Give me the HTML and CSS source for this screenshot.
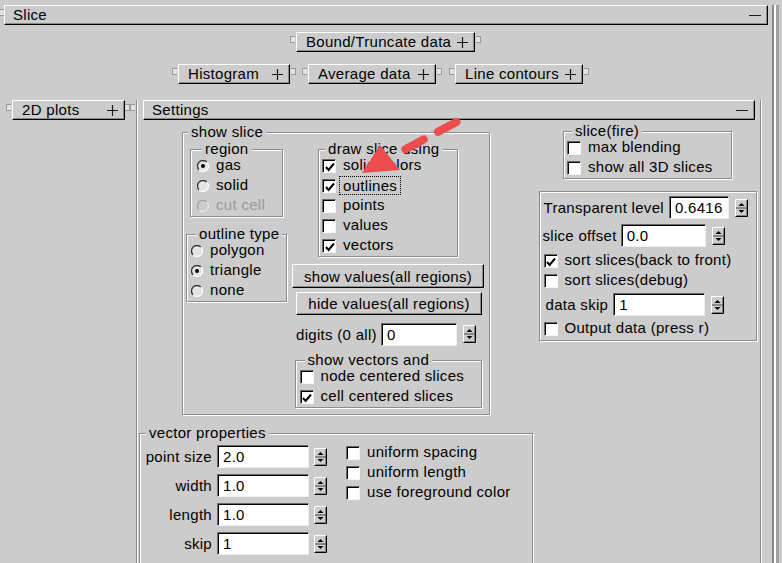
FILE: index.html
```html
<!DOCTYPE html>
<html>
<head>
<meta charset="utf-8">
<title>Slice</title>
<link rel="stylesheet" href="styles.css">
</head>
<body>
<div class="slice">
  <div class="headrow">
    <span class="cn l"></span>
    <div class="rollhead slicehead"><span>Slice</span><i class="minus"></i></div>
  </div>

  <div class="btnrow r1">
    <div class="rgrp">
      <span class="cn l"></span>
      <div class="rbtn w-bound"><span>Bound/Truncate data</span><svg class="plus" width="11" height="11" viewBox="0 0 11 11"><path d="M5.5 0v11M0 5.5h11" stroke="#1a1a1a" stroke-width="1.2"/></svg></div>
      <span class="cn r"></span>
    </div>
  </div>

  <div class="btnrow r2">
    <div class="rgrp">
      <span class="cn l"></span>
      <div class="rbtn w-hist"><span>Histogram</span><svg class="plus" width="11" height="11" viewBox="0 0 11 11"><path d="M5.5 0v11M0 5.5h11" stroke="#1a1a1a" stroke-width="1.2"/></svg></div>
      <span class="cn r"></span>
    </div>
    <div class="rgrp">
      <span class="cn l"></span>
      <div class="rbtn w-avg"><span>Average data</span><svg class="plus" width="11" height="11" viewBox="0 0 11 11"><path d="M5.5 0v11M0 5.5h11" stroke="#1a1a1a" stroke-width="1.2"/></svg></div>
      <span class="cn r"></span>
    </div>
    <div class="rgrp g-line">
      <span class="cn l"></span>
      <div class="rbtn w-avg"><span>Line contours</span><svg class="plus" width="11" height="11" viewBox="0 0 11 11"><path d="M5.5 0v11M0 5.5h11" stroke="#1a1a1a" stroke-width="1.2"/></svg></div>
      <span class="cn r"></span>
    </div>
  </div>

  <div class="mainrow">
    <div class="rgrp g2d">
      <span class="cn l"></span>
      <div class="rbtn w-2d"><span>2D plots</span><svg class="plus" width="11" height="11" viewBox="0 0 11 11"><path d="M5.5 0v11M0 5.5h11" stroke="#1a1a1a" stroke-width="1.2"/></svg></div>
      <span class="cn r tight"></span>
    </div>
    <span class="cn l setcn"></span>

    <div class="settings">
      <div class="rollhead sethead"><span>Settings</span><i class="minus"></i></div>
      <div class="setbody">
        <div class="colL">
          <fieldset class="grp showslice">
            <legend>show slice</legend>
            <div class="ss-inner">
              <div class="subL">
                <fieldset class="grp region">
                  <legend>region</legend>
                  <div class="row"><svg class="rd" width="12" height="12" viewBox="0 0 12 12"><circle cx="6" cy="6" r="5" fill="#e4e4e4"/><path d="M2.1 9.9A5.5 5.5 0 0 1 9.9 2.1" fill="none" stroke="#333" stroke-width="1.3"/><path d="M9.9 2.1A5.5 5.5 0 0 1 2.1 9.9" fill="none" stroke="#fff" stroke-width="1.3"/><circle cx="6" cy="6" r="2" fill="#000"/></svg><span class="t">gas</span></div>
                  <div class="row"><svg class="rd" width="12" height="12" viewBox="0 0 12 12"><circle cx="6" cy="6" r="5" fill="#e4e4e4"/><path d="M2.1 9.9A5.5 5.5 0 0 1 9.9 2.1" fill="none" stroke="#333" stroke-width="1.3"/><path d="M9.9 2.1A5.5 5.5 0 0 1 2.1 9.9" fill="none" stroke="#fff" stroke-width="1.3"/></svg><span class="t">solid</span></div>
                  <div class="row off"><svg class="rd" width="12" height="12" viewBox="0 0 12 12"><path d="M2.1 9.9A5.5 5.5 0 0 1 9.9 2.1" fill="none" stroke="#9a9a9a" stroke-width="1.2"/><path d="M9.9 2.1A5.5 5.5 0 0 1 2.1 9.9" fill="none" stroke="#e8e8e8" stroke-width="1.2"/></svg><span class="t">cut cell</span></div>
                </fieldset>
                <fieldset class="grp outline">
                  <legend>outline type</legend>
                  <div class="row"><svg class="rd" width="12" height="12" viewBox="0 0 12 12"><circle cx="6" cy="6" r="5" fill="#e4e4e4"/><path d="M2.1 9.9A5.5 5.5 0 0 1 9.9 2.1" fill="none" stroke="#333" stroke-width="1.3"/><path d="M9.9 2.1A5.5 5.5 0 0 1 2.1 9.9" fill="none" stroke="#fff" stroke-width="1.3"/></svg><span class="t">polygon</span></div>
                  <div class="row"><svg class="rd" width="12" height="12" viewBox="0 0 12 12"><circle cx="6" cy="6" r="5" fill="#e4e4e4"/><path d="M2.1 9.9A5.5 5.5 0 0 1 9.9 2.1" fill="none" stroke="#333" stroke-width="1.3"/><path d="M9.9 2.1A5.5 5.5 0 0 1 2.1 9.9" fill="none" stroke="#fff" stroke-width="1.3"/><circle cx="6" cy="6" r="2" fill="#000"/></svg><span class="t">triangle</span></div>
                  <div class="row"><svg class="rd" width="12" height="12" viewBox="0 0 12 12"><circle cx="6" cy="6" r="5" fill="#e4e4e4"/><path d="M2.1 9.9A5.5 5.5 0 0 1 9.9 2.1" fill="none" stroke="#333" stroke-width="1.3"/><path d="M9.9 2.1A5.5 5.5 0 0 1 2.1 9.9" fill="none" stroke="#fff" stroke-width="1.3"/></svg><span class="t">none</span></div>
                </fieldset>
              </div>

              <div class="subR">
                <fieldset class="grp draw">
                  <legend>draw slice using</legend>
                  <div class="row"><span class="cb"><svg width="10" height="10" viewBox="0 0 10 10"><path d="M1 5l2.6 3L9 1.5" fill="none" stroke="#000" stroke-width="2"/></svg></span><span class="t">solid colors</span></div>
                  <div class="row"><span class="cb"><svg width="10" height="10" viewBox="0 0 10 10"><path d="M1 5l2.6 3L9 1.5" fill="none" stroke="#000" stroke-width="2"/></svg></span><span class="t focus">outlines</span></div>
                  <div class="row"><span class="cb"></span><span class="t">points</span></div>
                  <div class="row"><span class="cb"></span><span class="t">values</span></div>
                  <div class="row"><span class="cb"><svg width="10" height="10" viewBox="0 0 10 10"><path d="M1 5l2.6 3L9 1.5" fill="none" stroke="#000" stroke-width="2"/></svg></span><span class="t">vectors</span></div>
                </fieldset>
                <div class="pbtn w-show">show values(all regions)</div>
                <div class="pbtn w-hide">hide values(all regions)</div>
                <div class="frow digits">
                  <span>digits (0 all)</span>
                  <span class="field w-dig">0</span>
                  <svg class="spin" width="13" height="18" viewBox="0 0 13 18"><rect width="13" height="18" fill="#cdcdcd"/><path d="M0.5 17.5V0.5H12.5" fill="none" stroke="#fff"/><path d="M0.5 17.5H12.5V0.5" fill="none" stroke="#000"/><path d="M1.5 16.5H11.5V1.5" fill="none" stroke="#808080"/><path d="M1 9H12" stroke="#444"/><path d="M3.5 7L6.5 4L9.5 7Z" fill="#000"/><path d="M3.5 11L6.5 14L9.5 11Z" fill="#000"/></svg>
                </div>
                <fieldset class="grp vecs">
                  <legend>show vectors and</legend>
                  <div class="row"><span class="cb"></span><span class="t">node centered slices</span></div>
                  <div class="row"><span class="cb"><svg width="10" height="10" viewBox="0 0 10 10"><path d="M1 5l2.6 3L9 1.5" fill="none" stroke="#000" stroke-width="2"/></svg></span><span class="t">cell centered slices</span></div>
                </fieldset>
              </div>
            </div>
          </fieldset>

          <fieldset class="grp vprops">
            <legend>vector properties</legend>
            <div class="vp-inner">
              <div class="vgrid">
                <span class="lbl">point size</span><span class="field">2.0</span><svg class="spin" width="13" height="18" viewBox="0 0 13 18"><rect width="13" height="18" fill="#cdcdcd"/><path d="M0.5 17.5V0.5H12.5" fill="none" stroke="#fff"/><path d="M0.5 17.5H12.5V0.5" fill="none" stroke="#000"/><path d="M1.5 16.5H11.5V1.5" fill="none" stroke="#808080"/><path d="M1 9H12" stroke="#444"/><path d="M3.5 7L6.5 4L9.5 7Z" fill="#000"/><path d="M3.5 11L6.5 14L9.5 11Z" fill="#000"/></svg>
                <span class="lbl">width</span><span class="field">1.0</span><svg class="spin" width="13" height="18" viewBox="0 0 13 18"><rect width="13" height="18" fill="#cdcdcd"/><path d="M0.5 17.5V0.5H12.5" fill="none" stroke="#fff"/><path d="M0.5 17.5H12.5V0.5" fill="none" stroke="#000"/><path d="M1.5 16.5H11.5V1.5" fill="none" stroke="#808080"/><path d="M1 9H12" stroke="#444"/><path d="M3.5 7L6.5 4L9.5 7Z" fill="#000"/><path d="M3.5 11L6.5 14L9.5 11Z" fill="#000"/></svg>
                <span class="lbl">length</span><span class="field">1.0</span><svg class="spin" width="13" height="18" viewBox="0 0 13 18"><rect width="13" height="18" fill="#cdcdcd"/><path d="M0.5 17.5V0.5H12.5" fill="none" stroke="#fff"/><path d="M0.5 17.5H12.5V0.5" fill="none" stroke="#000"/><path d="M1.5 16.5H11.5V1.5" fill="none" stroke="#808080"/><path d="M1 9H12" stroke="#444"/><path d="M3.5 7L6.5 4L9.5 7Z" fill="#000"/><path d="M3.5 11L6.5 14L9.5 11Z" fill="#000"/></svg>
                <span class="lbl">skip</span><span class="field">1</span><svg class="spin" width="13" height="18" viewBox="0 0 13 18"><rect width="13" height="18" fill="#cdcdcd"/><path d="M0.5 17.5V0.5H12.5" fill="none" stroke="#fff"/><path d="M0.5 17.5H12.5V0.5" fill="none" stroke="#000"/><path d="M1.5 16.5H11.5V1.5" fill="none" stroke="#808080"/><path d="M1 9H12" stroke="#444"/><path d="M3.5 7L6.5 4L9.5 7Z" fill="#000"/><path d="M3.5 11L6.5 14L9.5 11Z" fill="#000"/></svg>
              </div>
              <div class="vchecks">
                <div class="row"><span class="cb"></span><span class="t">uniform spacing</span></div>
                <div class="row"><span class="cb"></span><span class="t">uniform length</span></div>
                <div class="row"><span class="cb"></span><span class="t">use foreground color</span></div>
              </div>
            </div>
          </fieldset>
        </div>

        <div class="colR">
          <fieldset class="grp fire">
            <legend>slice(fire)</legend>
            <div class="row"><span class="cb"></span><span class="t">max blending</span></div>
            <div class="row"><span class="cb"></span><span class="t">show all 3D slices</span></div>
          </fieldset>
          <div class="box">
            <div class="frow r-trans">
              <span>Transparent level</span>
              <span class="field w-trans">0.6416</span>
              <svg class="spin" width="13" height="18" viewBox="0 0 13 18"><rect width="13" height="18" fill="#cdcdcd"/><path d="M0.5 17.5V0.5H12.5" fill="none" stroke="#fff"/><path d="M0.5 17.5H12.5V0.5" fill="none" stroke="#000"/><path d="M1.5 16.5H11.5V1.5" fill="none" stroke="#808080"/><path d="M1 9H12" stroke="#444"/><path d="M3.5 7L6.5 4L9.5 7Z" fill="#000"/><path d="M3.5 11L6.5 14L9.5 11Z" fill="#000"/></svg>
            </div>
            <div class="frow r-off">
              <span>slice offset</span>
              <span class="field w-off">0.0</span>
              <svg class="spin" width="13" height="18" viewBox="0 0 13 18"><rect width="13" height="18" fill="#cdcdcd"/><path d="M0.5 17.5V0.5H12.5" fill="none" stroke="#fff"/><path d="M0.5 17.5H12.5V0.5" fill="none" stroke="#000"/><path d="M1.5 16.5H11.5V1.5" fill="none" stroke="#808080"/><path d="M1 9H12" stroke="#444"/><path d="M3.5 7L6.5 4L9.5 7Z" fill="#000"/><path d="M3.5 11L6.5 14L9.5 11Z" fill="#000"/></svg>
            </div>
            <div class="row r-sort"><span class="cb"><svg width="10" height="10" viewBox="0 0 10 10"><path d="M1 5l2.6 3L9 1.5" fill="none" stroke="#000" stroke-width="2"/></svg></span><span class="t">sort slices(back to front)</span></div>
            <div class="row"><span class="cb"></span><span class="t">sort slices(debug)</span></div>
            <div class="frow r-skip">
              <span>data skip</span>
              <span class="field w-skip">1</span>
              <svg class="spin" width="13" height="18" viewBox="0 0 13 18"><rect width="13" height="18" fill="#cdcdcd"/><path d="M0.5 17.5V0.5H12.5" fill="none" stroke="#fff"/><path d="M0.5 17.5H12.5V0.5" fill="none" stroke="#000"/><path d="M1.5 16.5H11.5V1.5" fill="none" stroke="#808080"/><path d="M1 9H12" stroke="#444"/><path d="M3.5 7L6.5 4L9.5 7Z" fill="#000"/><path d="M3.5 11L6.5 14L9.5 11Z" fill="#000"/></svg>
            </div>
            <div class="row r-out"><span class="cb"></span><span class="t">Output data (press r)</span></div>
          </div>
        </div>
      </div>
    </div>
  </div>
</div>

<svg class="arrow" width="782" height="563" viewBox="0 0 782 563">
  <line x1="456.5" y1="122" x2="405.3" y2="149.2" stroke="#ee4d4d" stroke-width="8" stroke-linecap="round" stroke-dasharray="21 16"/>
  <polygon points="380,145 400,170 362,173" fill="#ee4d4d"/>
</svg>
</body>
</html>
```

FILE: styles.css
```css
* { box-sizing: border-box; }

html, body {
  margin: 0;
  padding: 0;
  overflow: hidden;
}

body {
  width: 782px;
  height: 563px;
  background: #cccccc;
  font-family: "Liberation Sans", Arial, sans-serif;
  font-size: 15px;
  letter-spacing: 0.3px;
  color: #000;
  display: flow-root;
}

/* ---------- outer Slice panel ---------- */
.slice {
  margin-top: 8px;
  width: 774px;
  height: 560px;
  border-right: 2px solid #8a8a8a;
  box-shadow: 2px 0 0 #ffffff, 5px 0 0 #a2a2a2;
}

.headrow {
  display: flex;
  align-items: flex-start;
  margin-top: -3px;
}
.headrow .cn { margin-left: -1px; }

/* rollout connectors */
.cn {
  flex: none;
  width: 5px;
  height: 7px;
  margin-top: 4px;
  border: 1px solid #9a9a9a;
  background: #e2e2e2;
}
.cn.l { border-right: 0; }
.cn.r { border-left: 0; }

/* rollout header bars */
.rollhead {
  display: flex;
  align-items: center;
  justify-content: space-between;
  height: 20px;
  padding: 0 6px 0 8px;
  line-height: 18px;
  border: 1px solid;
  border-color: #ffffff #000000 #000000 #ffffff;
  box-shadow: inset -1px -1px 0 #8a8a8a;
  background: #cccccc;
}
.slicehead { width: 764px; }

.minus {
  display: block;
  width: 12px;
  height: 0;
  border-top: 1.5px solid #1e1e1e;
}

/* collapsed rollout buttons */
.btnrow { display: flex; align-items: flex-start; }
.r1 { margin-top: 7px; padding-left: 290px; }
.r2 { margin-top: 12px; padding-left: 172px; gap: 6px; }
.g-line { margin-left: 1px; }

.rgrp { display: flex; align-items: flex-start; gap: 1px; }

.rbtn {
  display: flex;
  align-items: center;
  justify-content: space-between;
  height: 20px;
  padding: 0 6px 0 9px;
  line-height: 18px;
  border: 1px solid;
  border-color: #ffffff #000000 #000000 #ffffff;
  box-shadow: inset -1px -1px 0 #8a8a8a;
  background: #cccccc;
  white-space: nowrap;
}
.plus { flex: none; display: block; }
.w-bound { width: 179px; }
.w-hist { width: 112px; }
.w-avg { width: 128px; }
.w-2d { width: 113px; }

/* ---------- main row ---------- */
.mainrow {
  display: flex;
  align-items: flex-start;
  margin-top: 16px;
}
.g2d { margin-left: 6px; }
.g2d .cn.tight { margin-left: -1px; }
.setcn { margin-left: 0; }

.settings {
  margin-left: 1px;
  width: 625px;
  height: 470px;
  border-left: 1px solid #8a8a8a;
  border-right: 1px solid #8a8a8a;
  box-shadow: inset 1px 0 0 #ffffff, 1px 0 0 #ffffff;
}
.sethead { margin-left: 6px; width: 612px; }

.setbody { display: flex; align-items: flex-start; }
.colL {
  width: 398px;
  display: flex;
  flex-direction: column;
  align-items: center;
}
.colR {
  width: 225px;
  display: flex;
  flex-direction: column;
  align-items: center;
}

/* ---------- etched group boxes ---------- */
.grp {
  margin: 0;
  padding: 0;
  min-width: 0;
  border: 1px solid #8c8c8c;
  box-shadow: inset 1px 1px 0 #ffffff, 1px 1px 0 #ffffff;
}
.grp > legend {
  padding: 0 3px;
  margin-left: 5px;
  line-height: 14px;
  background: #cccccc;
  white-space: nowrap;
}
.draw > legend { margin-left: 3px; }

.row {
  display: flex;
  align-items: center;
  gap: 7px;
  height: 20px;
  white-space: nowrap;
}
.row .t { line-height: 18px; margin-bottom: 2px; }
.row.off { color: #9a9a9a; }

.rd { flex: none; display: block; }

.cb {
  flex: none;
  width: 14px;
  height: 14px;
  display: flex;
  align-items: center;
  justify-content: center;
  background: #ffffff;
  border: 1px solid;
  border-color: #686868 #f4f4f4 #f4f4f4 #686868;
  box-shadow: inset 1px 1px 0 #000000;
}
.cb svg { display: block; margin: 1px 0 0 1px; }

.row .focus {
  margin-left: -4px;
  padding: 0 3px;
  line-height: 17px;
  border: 1px dotted #000;
}

/* show slice */
.showslice { margin-top: 5px; width: 308px; height: 290px; }
.ss-inner { display: flex; align-items: flex-start; padding-top: 3px; }
.subL {
  width: 107px;
  display: flex;
  flex-direction: column;
  align-items: center;
}
.subR {
  width: 196px;
  display: flex;
  flex-direction: column;
  align-items: center;
}
.region { width: 93px; padding-left: 6px; }
.outline { width: 101px; padding-left: 4px; margin-top: 10px; }
.draw { width: 140px; padding-left: 3px; }
.vecs { width: 187px; padding-left: 4px; margin-top: 7px; }

/* push buttons */
.pbtn {
  display: flex;
  align-items: center;
  justify-content: center;
  white-space: nowrap;
  border: 1px solid;
  border-color: #ffffff #000000 #000000 #ffffff;
  box-shadow: inset -1px -1px 0 #8a8a8a;
  background: #cccccc;
}
.w-show { width: 192px; height: 24px; margin-top: 7px; }
.w-hide { width: 186px; height: 23px; margin-top: 4px; margin-left: 2px; }

/* text fields with spinners */
.frow {
  display: flex;
  align-items: center;
  height: 23px;
  white-space: nowrap;
}
.field {
  display: block;
  height: 23px;
  padding-left: 5px;
  line-height: 21px;
  background: #ffffff;
  border: 1px solid;
  border-color: #6a6a6a #eeeeee #eeeeee #6a6a6a;
  box-shadow: inset 1px 1px 0 #000000;
}
.spin { flex: none; display: block; }
.frow .field { margin-left: 4px; }
.frow .spin { margin-left: 6px; }

.digits { align-self: flex-start; margin-left: 6px; margin-top: 7px; height: 24px; }
.w-dig { width: 76px; }

/* vector properties */
.vprops { margin-top: 11px; width: 394px; height: 150px; padding-left: 1px; }
.vp-inner { display: flex; align-items: flex-start; }
.vgrid {
  display: grid;
  grid-template-columns: 71px 92px 13px;
  grid-auto-rows: 23px;
  column-gap: 5px;
  row-gap: 6px;
  align-items: center;
  padding-top: 5px;
}
.lbl { text-align: right; white-space: nowrap; }
.vchecks { margin-left: 19px; padding-top: 3px; }

/* right column */
.fire { margin-top: 4px; width: 169px; padding-left: 3px; }

.box {
  margin-top: 12px;
  width: 218px;
  height: 150px;
  padding: 4px 0 0 4px;
  border: 1px solid #8c8c8c;
  box-shadow: inset 1px 1px 0 #ffffff, 1px 1px 0 #ffffff;
}
.r-trans .field { margin-left: 5px; }
.w-trans { width: 60px; }
.r-off { margin-top: 5px; margin-left: -1px; }
.w-off { width: 85px; }
.r-sort { margin-top: 4px; }
.r-skip { margin-top: 2px; margin-left: 2px; }
.r-skip .field { margin-left: 5px; }
.w-skip { width: 92px; }
.r-out { margin-top: 3px; }

/* annotation arrow overlay */
.arrow {
  position: absolute;
  left: 0;
  top: 0;
  pointer-events: none;
}
```
